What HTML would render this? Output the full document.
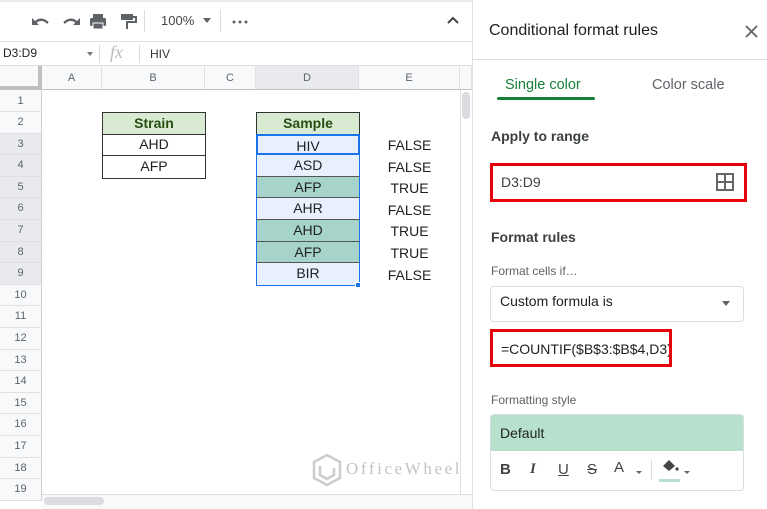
<!DOCTYPE html>
<html><head><meta charset="utf-8"><style>
*{box-sizing:border-box;margin:0;padding:0}
body{width:767px;height:509px;overflow:hidden;background:#fff;font-family:"Liberation Sans",Arial,sans-serif;position:relative;color:#202124}
.a{position:absolute}
.rh{position:absolute;left:0;width:42px;background:#f8f9fa;border-bottom:1px solid #e0e0e0;border-right:1px solid #d0d0d0;color:#5f6368;font-size:11px;text-align:center}
.ch{position:absolute;top:66px;height:24px;background:#f8f9fa;border-right:1px solid #e0e0e0;border-bottom:1px solid #c0c0c0;color:#5f6368;font-size:11px;text-align:center;line-height:24px}
.c{position:absolute;text-align:center;font-size:14px;color:#202124}
.p{position:absolute;font-size:14px}
</style></head><body>
<div class="a" style="left:0;top:0;width:472px;height:2px;background:#e8eaed"></div>
<div class="a" style="left:0;top:41px;width:472px;height:1px;background:#e0e0e0"></div>
<svg class="a" style="left:30px;top:12px" width="110" height="20" viewBox="0 0 110 20">
<path d="M4 12 Q10 4 18 11" stroke="#5f6368" stroke-width="2.4" fill="none"/><path d="M2 6 L2 13 L9 13Z" fill="#5f6368"/>
<path d="M48 12 Q42 4 34 11" stroke="#5f6368" stroke-width="2.4" fill="none"/><path d="M50 6 L50 13 L43 13Z" fill="#5f6368"/>
<rect x="60" y="6" width="16" height="8" rx="1.5" fill="#5f6368"/><rect x="63" y="2" width="10" height="4" fill="#5f6368"/><rect x="63" y="11" width="10" height="6" fill="#5f6368" stroke="#fff" stroke-width="1"/>
<rect x="91" y="2" width="12" height="6" fill="#5f6368"/><path d="M103 5 H106 V10 H97 V17" stroke="#5f6368" stroke-width="2" fill="none"/>
</svg>
<div class="a" style="left:144px;top:10px;width:1px;height:22px;background:#dadce0"></div>
<div class="a" style="left:161px;top:13px;font-size:13px;color:#444">100%</div>
<div class="a" style="left:203px;top:18px;border:4px solid transparent;border-top:5px solid #5f6368"></div>
<div class="a" style="left:220px;top:10px;width:1px;height:22px;background:#dadce0"></div>
<svg class="a" style="left:231px;top:19px" width="18" height="6"><circle cx="3" cy="3" r="1.5" fill="#5f6368"/><circle cx="9" cy="3" r="1.5" fill="#5f6368"/><circle cx="15" cy="3" r="1.5" fill="#5f6368"/></svg>
<svg class="a" style="left:446px;top:15px" width="14" height="10"><path d="M2 8 L7 3 L12 8" stroke="#444" stroke-width="2" fill="none"/></svg>
<div class="a" style="left:3px;top:46px;font-size:12px;color:#202124">D3:D9</div>
<div class="a" style="left:87px;top:52px;border:3px solid transparent;border-top:4px solid #777"></div>
<div class="a" style="left:99px;top:45px;width:1px;height:18px;background:#dadce0"></div>
<div class="a" style="left:110px;top:42px;font-family:'Liberation Serif',serif;font-style:italic;font-size:18px;color:#bbb">fx</div>
<div class="a" style="left:139px;top:45px;width:1px;height:18px;background:#dadce0"></div>
<div class="a" style="left:150px;top:47px;font-size:12px;color:#333">HIV</div>
<div class="a" style="left:0;top:65px;width:472px;height:1px;background:#e0e0e0"></div>
<div class="a" style="left:0;top:66px;width:42px;height:24px;background:#f8f9fa;border-right:4px solid #c0c0c0;border-bottom:4px solid #c0c0c0"></div>
<div class="ch" style="left:42px;width:60px">A</div>
<div class="ch" style="left:102px;width:103px">B</div>
<div class="ch" style="left:205px;width:51px">C</div>
<div class="ch" style="left:256px;width:103px;background:#e8eaed">D</div>
<div class="ch" style="left:359px;width:101px">E</div>
<div class="ch" style="left:460px;width:12px"></div>
<div class="rh" style="top:90px;height:22px;line-height:22px">1</div>
<div class="rh" style="top:112px;height:21.6px;line-height:21.6px">2</div>
<div class="rh" style="top:133.6px;height:21.6px;line-height:21.6px;background:#e8eaed">3</div>
<div class="rh" style="top:155.2px;height:21.6px;line-height:21.6px;background:#e8eaed">4</div>
<div class="rh" style="top:176.8px;height:21.6px;line-height:21.6px;background:#e8eaed">5</div>
<div class="rh" style="top:198.4px;height:21.6px;line-height:21.6px;background:#e8eaed">6</div>
<div class="rh" style="top:220px;height:21.6px;line-height:21.6px;background:#e8eaed">7</div>
<div class="rh" style="top:241.6px;height:21.6px;line-height:21.6px;background:#e8eaed">8</div>
<div class="rh" style="top:263.2px;height:21.6px;line-height:21.6px;background:#e8eaed">9</div>
<div class="rh" style="top:284.8px;height:21.6px;line-height:21.6px">10</div>
<div class="rh" style="top:306.4px;height:21.6px;line-height:21.6px">11</div>
<div class="rh" style="top:328px;height:21.6px;line-height:21.6px">12</div>
<div class="rh" style="top:349.6px;height:21.6px;line-height:21.6px">13</div>
<div class="rh" style="top:371.2px;height:21.6px;line-height:21.6px">14</div>
<div class="rh" style="top:392.8px;height:21.6px;line-height:21.6px">15</div>
<div class="rh" style="top:414.4px;height:21.6px;line-height:21.6px">16</div>
<div class="rh" style="top:436px;height:21.6px;line-height:21.6px">17</div>
<div class="rh" style="top:457.6px;height:21.6px;line-height:21.6px">18</div>
<div class="rh" style="top:479.2px;height:21.6px;line-height:21.6px">19</div>
<div class="c" style="left:102px;top:112px;width:104px;height:22.6px;line-height:21px;background:#d9ead3;border:1px solid #333;font-weight:bold;color:#274e13">Strain</div>
<div class="c" style="left:102px;top:133.6px;width:104px;height:22.6px;line-height:21px;border:1px solid #333;border-top:none">AHD</div>
<div class="c" style="left:102px;top:155.2px;width:104px;height:23.6px;line-height:21px;border:1px solid #333">AFP</div>
<div class="c" style="left:256px;top:112px;width:104px;height:22.6px;line-height:21px;background:#d9ead3;border:1px solid #333;font-weight:bold;color:#274e13">Sample</div>
<div class="c" style="left:256px;top:133.6px;width:104px;height:21.6px;line-height:20px;background:#e8f0fe;border:2px solid #1a73e8">HIV</div>
<div class="c" style="left:256px;top:155.2px;width:104px;height:21.6px;line-height:21px;background:#e8f0fe;border-left:1px solid #1a73e8;border-right:1px solid #1a73e8;border-bottom:1px solid #555">ASD</div>
<div class="c" style="left:256px;top:176.8px;width:104px;height:21.6px;line-height:21px;background:#a6d4cb;border-left:1px solid #1a73e8;border-right:1px solid #1a73e8;border-bottom:1px solid #555">AFP</div>
<div class="c" style="left:256px;top:198.4px;width:104px;height:21.6px;line-height:21px;background:#e8f0fe;border-left:1px solid #1a73e8;border-right:1px solid #1a73e8;border-bottom:1px solid #555">AHR</div>
<div class="c" style="left:256px;top:220px;width:104px;height:21.6px;line-height:21px;background:#a6d4cb;border-left:1px solid #1a73e8;border-right:1px solid #1a73e8;border-bottom:1px solid #555">AHD</div>
<div class="c" style="left:256px;top:241.6px;width:104px;height:21.6px;line-height:21px;background:#a6d4cb;border-left:1px solid #1a73e8;border-right:1px solid #1a73e8;border-bottom:1px solid #555">AFP</div>
<div class="c" style="left:256px;top:263.2px;width:104px;height:22.6px;line-height:21px;background:#e8f0fe;border:1px solid #1a73e8;border-top:none">BIR</div>
<div class="a" style="left:355px;top:282px;width:6px;height:6px;background:#1a73e8;border:1px solid #fff"></div>
<div class="c" style="left:359px;top:135px;width:101px;line-height:21.6px">FALSE<br>FALSE<br>TRUE<br>FALSE<br>TRUE<br>TRUE<br>FALSE</div>
<div class="a" style="left:460px;top:90px;width:12px;height:404px;background:#fff;border-left:1px solid #e0e0e0"></div>
<div class="a" style="left:462px;top:92px;width:8px;height:27px;background:#dadce0;border-radius:4px"></div>
<div class="a" style="left:42px;top:494px;width:430px;height:15px;background:#f8f9fa;border-top:1px solid #e0e0e0"></div>
<div class="a" style="left:44px;top:497px;width:60px;height:8px;background:#dadce0;border-radius:4px"></div>
<svg class="a" style="left:311px;top:453px" width="32" height="36"><path d="M16 2 L29 9 V25 L16 32 L3 25 V9Z" fill="none" stroke="#ccc" stroke-width="2.5"/><path d="M9 13 V22 L16 26 L23 22 V15" fill="none" stroke="#ccc" stroke-width="2.5"/></svg>
<div class="a" style="left:346px;top:459px;font-family:'Liberation Serif',serif;font-size:17px;color:#c4c4c4;letter-spacing:2.6px">OfficeWheel</div>
<div class="a" style="left:472px;top:0;width:295px;height:509px;background:#fff;border-left:1px solid #e0e0e0"></div>
<div class="a" style="left:472px;top:59px;width:295px;height:1px;background:#e0e0e0"></div>
<div class="p" style="left:489px;top:22px;font-size:16px;color:#202124">Conditional format rules</div>
<svg class="a" style="left:745px;top:25px" width="13" height="13"><path d="M1 1 L12 12 M12 1 L1 12" stroke="#5f6368" stroke-width="1.8"/></svg>
<div class="p" style="left:505px;top:77px;color:#188038;font-size:14.5px">Single color</div>
<div class="a" style="left:497px;top:97px;width:98px;height:3px;background:#188038;border-radius:2px"></div>
<div class="p" style="left:652px;top:77px;color:#5f6368;font-size:14.5px">Color scale</div>
<div class="p" style="left:491px;top:128px;color:#3c4043;font-weight:600">Apply to range</div>
<div class="a" style="left:490px;top:163px;width:257px;height:39px;border:3px solid #e8000b"></div>
<div class="p" style="left:501px;top:174px;color:#3c4043">D3:D9</div>
<svg class="a" style="left:716px;top:173px" width="18" height="18"><rect x="1" y="1" width="16" height="16" fill="none" stroke="#666" stroke-width="2"/><path d="M9 1 V17 M1 9 H17" stroke="#666" stroke-width="2"/></svg>
<div class="p" style="left:491px;top:229px;color:#3c4043;font-weight:600">Format rules</div>
<div class="p" style="left:491px;top:264px;font-size:12px;color:#5f6368">Format cells if…</div>
<div class="a" style="left:490px;top:286px;width:254px;height:36px;border:1px solid #dadce0;border-radius:4px"></div>
<div class="p" style="left:500px;top:293px;color:#202124">Custom formula is</div>
<div class="a" style="left:722px;top:301px;border:4px solid transparent;border-top:5px solid #5f6368"></div>
<div class="a" style="left:490px;top:329px;width:182px;height:38px;border:3px solid #e8000b;overflow:hidden"><div style="position:absolute;left:8px;top:9px;font-size:14px;color:#202124;white-space:nowrap">=COUNTIF($B$3:$B$4,D3)</div></div>
<div class="p" style="left:491px;top:393px;font-size:12px;color:#5f6368">Formatting style</div>
<div class="a" style="left:490px;top:414px;width:254px;height:77px;border:1px solid #dadce0;border-radius:4px;overflow:hidden"><div style="height:36px;background:#b7e1cd;padding:10px 0 0 9px;font-size:14px">Default</div></div>
<div class="p" style="left:500px;top:461px;font-weight:bold;color:#444;font-size:15px">B</div>
<div class="p" style="left:530px;top:461px;font-style:italic;color:#444;font-size:15px;font-family:'Liberation Serif',serif;font-weight:bold">I</div>
<div class="p" style="left:558px;top:461px;color:#444;font-size:15px;text-decoration:underline">U</div>
<div class="p" style="left:587px;top:461px;color:#444;font-size:15px;text-decoration:line-through">S</div>
<div class="p" style="left:614px;top:459px;color:#444;font-size:15px">A</div>
<div class="a" style="left:636px;top:471px;border:3px solid transparent;border-top:3px solid #666"></div>
<div class="a" style="left:651px;top:460px;width:1px;height:20px;background:#dadce0"></div>
<svg class="a" style="left:660px;top:459px" width="20" height="14"><path d="M3 7 L9 1 L15 7 L9 12Z" fill="#444"/><circle cx="17" cy="10" r="1.6" fill="#444"/></svg>
<div class="a" style="left:659px;top:479px;width:21px;height:3px;background:#b7e1cd"></div>
<div class="a" style="left:684px;top:471px;border:3px solid transparent;border-top:3px solid #666"></div>
</body></html>
